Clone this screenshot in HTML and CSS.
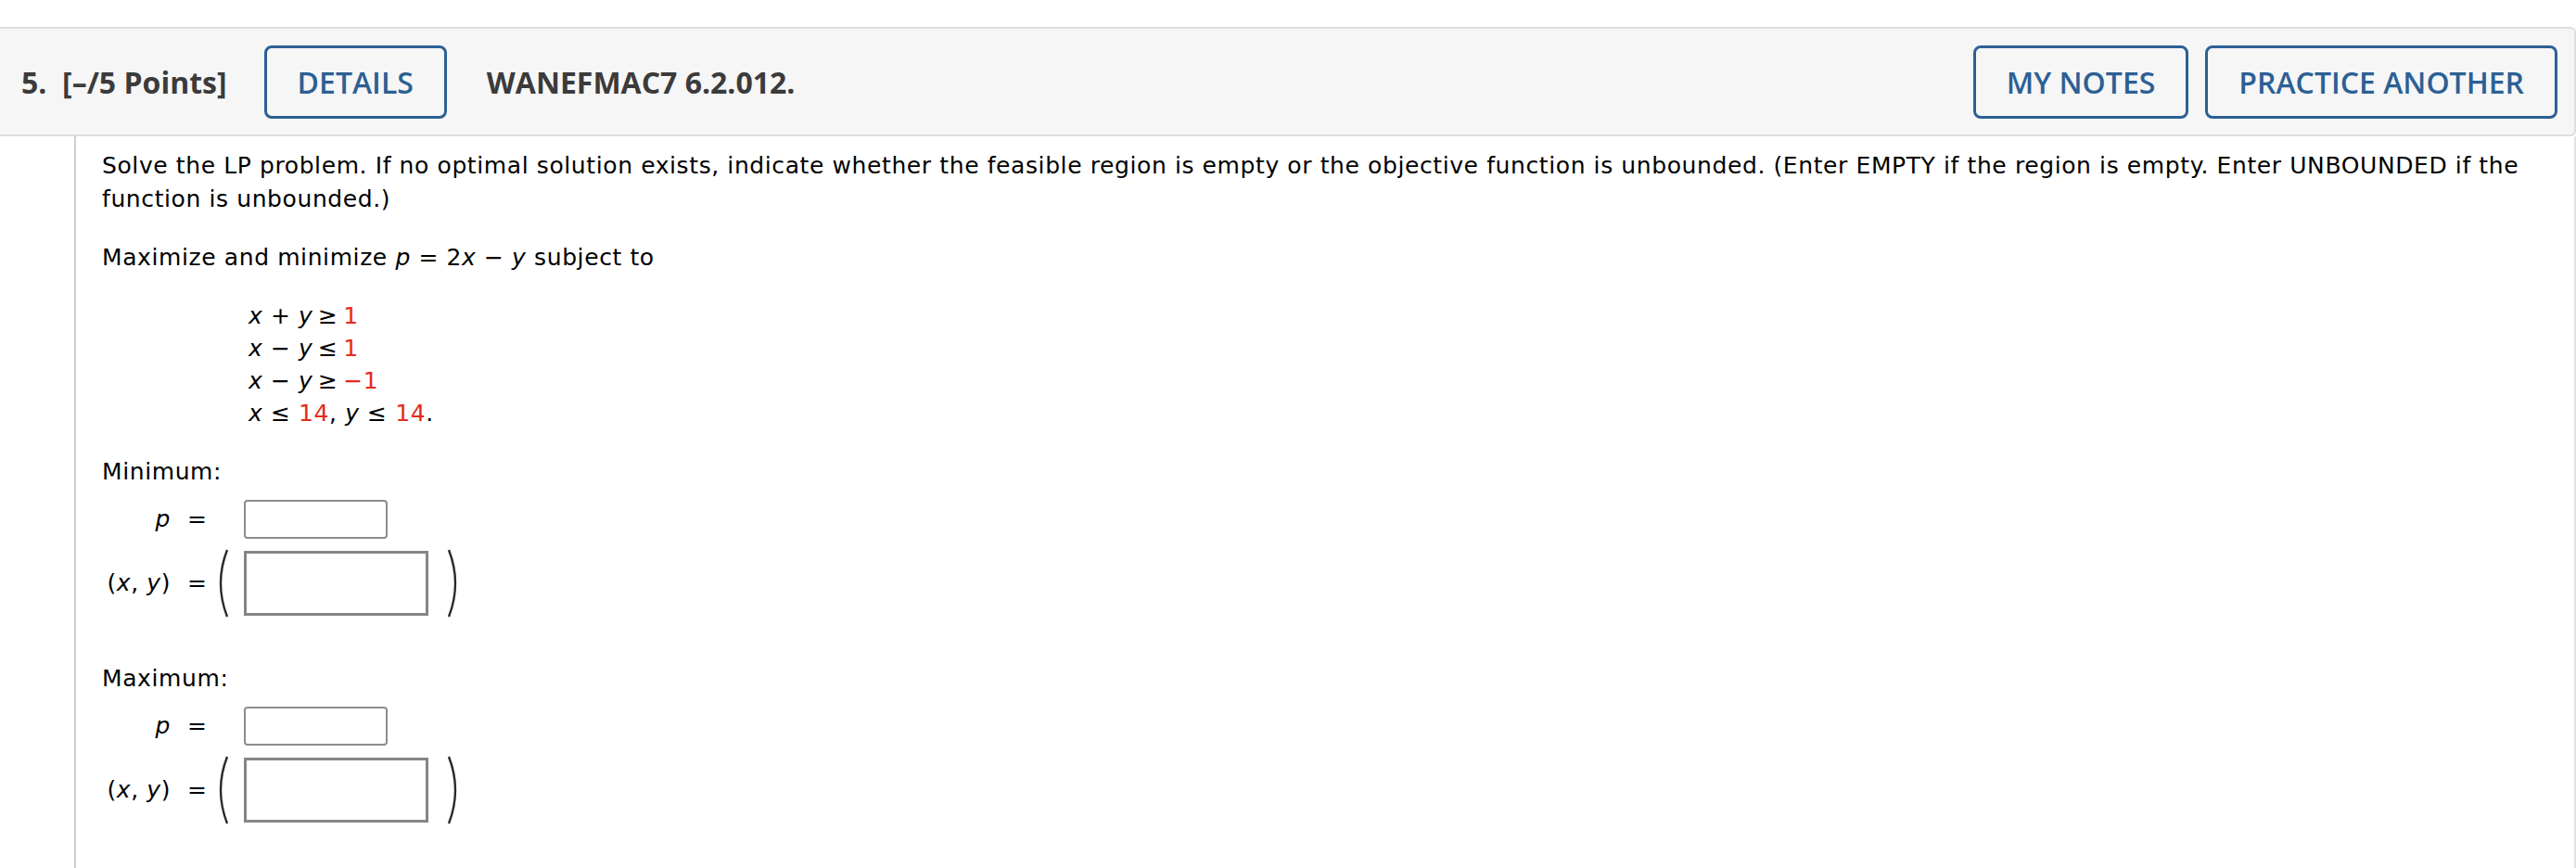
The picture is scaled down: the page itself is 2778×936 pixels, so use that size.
FILE: index.html
```html
<!DOCTYPE html>
<html lang="en">
<head>
  <meta charset="UTF-8" />
  <title>Question 5</title>
  <link rel="stylesheet" href="styles.css">
</head>
<body>
  <div class="question">
    <div class="q-header">
      <span class="q-points">5.&nbsp; [–/5 Points]</span>
      <button class="q-btn q-details">DETAILS</button>
      <span class="q-code">WANEFMAC7 6.2.012.</span>
      <div class="q-actions">
        <button class="q-btn">MY NOTES</button>
        <button class="q-btn">PRACTICE ANOTHER</button>
      </div>
    </div>

    <div class="q-body">
      <p class="q-text">Solve the LP problem. If no optimal solution exists, indicate whether the feasible region is empty or the objective function is unbounded. (Enter EMPTY if the region is empty. Enter UNBOUNDED if the function is unbounded.)</p>

      <p class="q-text">Maximize and minimize <i>p</i> = 2<i>x</i> − <i>y</i> subject to</p>

      <div class="constraints">
        <div><i>x</i> + <i>y</i>&thinsp;≥&thinsp;<span class="red">1</span></div>
        <div><i>x</i> − <i>y</i>&thinsp;≤&thinsp;<span class="red">1</span></div>
        <div><i>x</i> − <i>y</i>&thinsp;≥&thinsp;<span class="red">−1</span></div>
        <div><i>x</i> ≤ <span class="red">14</span>, <i>y</i> ≤ <span class="red">14</span>.</div>
      </div>

      <div class="answer-block">
        <div class="answer-title">Minimum:</div>
        <div class="answer-row">
          <span class="answer-label"><i>p</i></span>
          <span class="answer-eq">=</span>
          <input class="answer-input" type="text">
        </div>
        <div class="answer-row answer-row-pair">
          <span class="answer-label">(<i>x</i>, <i>y</i>)</span>
          <span class="answer-eq">=</span>
          <svg class="paren" width="18" height="76" viewBox="0 0 18 76"><path d="M15 2 Q1 38 15 74" fill="none" stroke="#2a2a2a" stroke-width="2.4"/></svg>
          <input class="answer-pair" type="text">
          <svg class="paren" width="18" height="76" viewBox="0 0 18 76"><path d="M3 2 Q17 38 3 74" fill="none" stroke="#2a2a2a" stroke-width="2.4"/></svg>
        </div>
      </div>

      <div class="answer-block answer-block-max">
        <div class="answer-title">Maximum:</div>
        <div class="answer-row">
          <span class="answer-label"><i>p</i></span>
          <span class="answer-eq">=</span>
          <input class="answer-input" type="text">
        </div>
        <div class="answer-row answer-row-pair">
          <span class="answer-label">(<i>x</i>, <i>y</i>)</span>
          <span class="answer-eq">=</span>
          <svg class="paren" width="18" height="76" viewBox="0 0 18 76"><path d="M15 2 Q1 38 15 74" fill="none" stroke="#2a2a2a" stroke-width="2.4"/></svg>
          <input class="answer-pair" type="text">
          <svg class="paren" width="18" height="76" viewBox="0 0 18 76"><path d="M3 2 Q17 38 3 74" fill="none" stroke="#2a2a2a" stroke-width="2.4"/></svg>
        </div>
      </div>
    </div>
  </div>
</body>
</html>
```

FILE: styles.css
```css
body {
  margin: 0;
  padding: 0;
  background: #fff;
  font-family: "DejaVu Sans", Verdana, sans-serif;
  color: #000;
}

.question {
  padding-top: 29px;
}

.q-header {
  display: flex;
  align-items: center;
  height: 114px;
  padding-left: 23px;
  padding-right: 18px;
  background: #f6f6f6;
  border: 2px solid #dedede;
  border-left: none;
  border-radius: 0 6px 6px 0;
  font-family: "Open Sans", sans-serif;
  font-size: 32px;
  color: #3b3b3b;
}

.q-points,
.q-code {
  font-weight: 700;
}

.q-btn {
  height: 79px;
  padding: 0 33px;
  background: transparent;
  border: 3px solid #2c6094;
  border-radius: 8px;
  color: #2c6094;
  font-family: "Open Sans", sans-serif;
  font-size: 32px;
  font-weight: 600;
  cursor: pointer;
}

.q-details {
  margin-left: 40px;
  margin-right: 43px;
}

.q-actions {
  display: flex;
  gap: 18px;
  margin-left: auto;
}

.q-body {
  margin-left: 80px;
  padding: 14px 40px 0 28px;
  border-left: 2px solid #cfcfcf;
  border-right: 2px solid #e2e2e2;
  min-height: 775px;
  font-size: 25px;
  line-height: 36px;
  letter-spacing: 0.6px;
}

.q-text {
  margin: 0 0 27px;
}

.constraints {
  margin-left: 158px;
  line-height: 35px;
}

.red {
  color: #e5291d;
}

.answer-block {
  margin-top: 28px;
}

.answer-block-max {
  margin-top: 47px;
}

.answer-title {
  margin-bottom: 12px;
}

.answer-row {
  display: flex;
  align-items: center;
  height: 42px;
}

.answer-row-pair {
  height: 76px;
  margin-top: 10px;
}

.answer-label {
  width: 74px;
  text-align: right;
}

.answer-eq {
  width: 28px;
  margin-left: 18px;
}

.answer-input {
  box-sizing: border-box;
  width: 155px;
  height: 42px;
  margin: 0 0 0 33px;
  border: 2px solid #8c8c8c;
  border-radius: 4px;
}

.answer-pair {
  box-sizing: border-box;
  width: 199px;
  height: 70px;
  margin: 0 0 0 15px;
  border: 3px solid #858585;
  border-radius: 0;
}

.paren + .answer-pair + .paren {
  margin-left: 19px;
}
```
